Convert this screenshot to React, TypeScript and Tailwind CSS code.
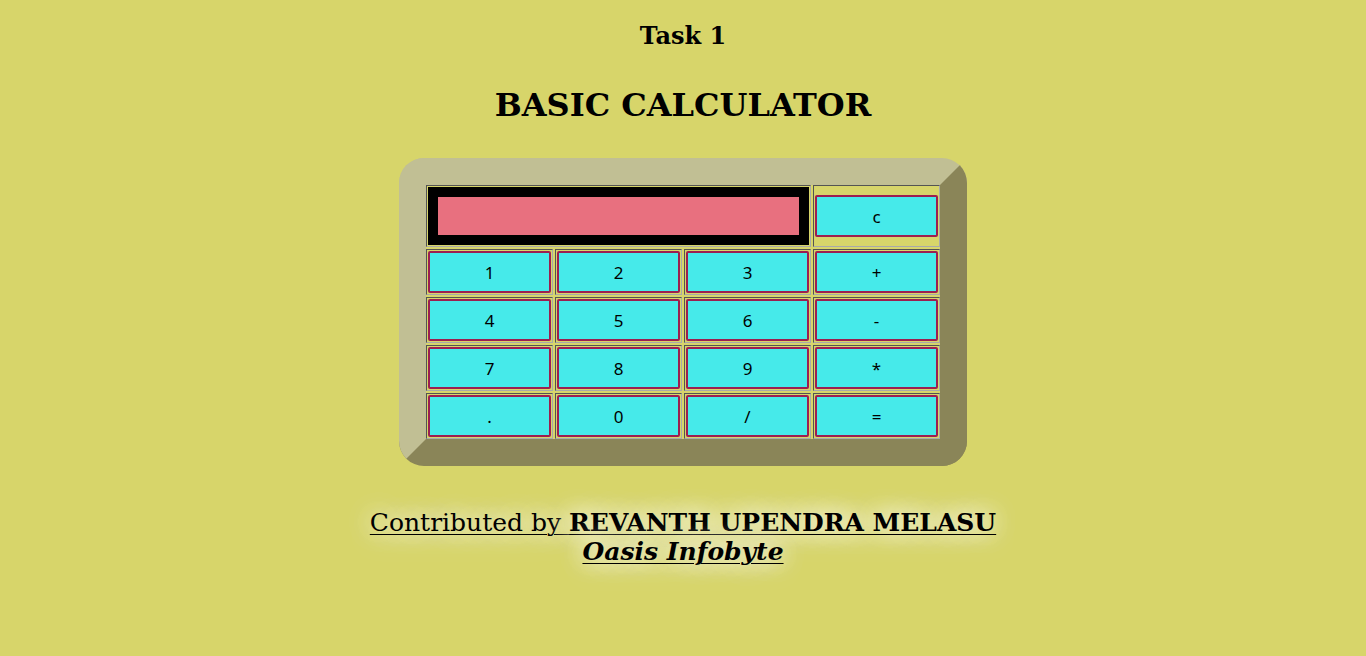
const keys = [
  ['1', '2', '3', '+'],
  ['4', '5', '6', '-'],
  ['7', '8', '9', '*'],
  ['.', '0', '/', '='],
];

function Key({ label }: { label: string }) {
  return (
    <div className="flex items-center justify-center border border-t-[#545454] border-l-[#545454] border-b-[#a9a9a9] border-r-[#a9a9a9] p-px">
      <button className="h-[42px] w-[123px] rounded-[2px] border-2 border-[#9c1f50] bg-[#46eaea] pt-px text-[17px] text-black font-['Noto_Sans',sans-serif]">
        {label}
      </button>
    </div>
  );
}

export default function App() {
  return (
    <div className="min-h-screen bg-[#d7d56a] pt-[22px] text-black font-['DejaVu_Serif',serif]">
      <h3 className="text-center text-[24px] font-bold leading-[28px]">Task 1</h3>
      <h1 className="mt-[37px] text-center text-[32px] font-bold leading-[37px]">BASIC CALCULATOR</h1>

      <div className="mx-auto mt-[34px] w-[568px] rounded-[25px] border-[27px] border-t-[#c1bf94] border-l-[#c1bf94] border-b-[#8a8558] border-r-[#8a8558] bg-[#d7d56a]">
        <div className="grid grid-cols-[repeat(4,127px)] grid-rows-[62px_repeat(4,46px)] gap-[2px]">
          <div className="col-span-3 border border-t-[#545454] border-l-[#545454] border-b-[#a9a9a9] border-r-[#a9a9a9] p-px">
            <input
              readOnly
              className="block h-full w-full border-[10px] border-black bg-[#e8707f] outline-none"
            />
          </div>
          <Key label="c" />
          {keys.flat().map((k) => (
            <Key key={k} label={k} />
          ))}
        </div>
      </div>

      <div className="mt-[42px] text-center text-[25px] leading-[29px] [text-shadow:0_0_24px_#ffffff,0_0_24px_#ffffee]">
        <span className="underline decoration-1 underline-offset-[3px]">
          Contributed by <b>REVANTH UPENDRA MELASU</b>
        </span>
        <br />
        <b className="italic underline decoration-1 underline-offset-[3px]">Oasis Infobyte</b>
      </div>
    </div>
  );
}
